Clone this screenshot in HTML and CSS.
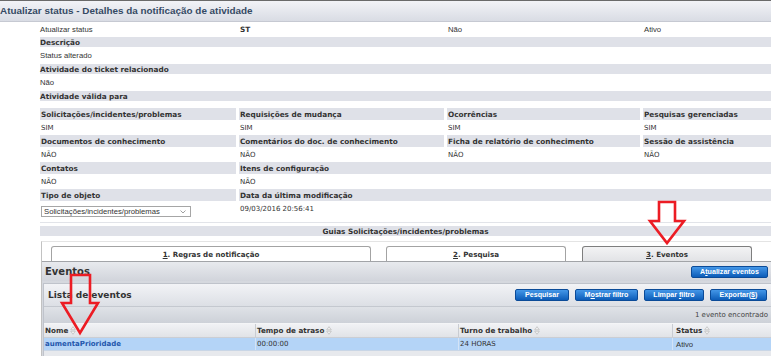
FILE: index.html
```html
<!DOCTYPE html>
<html lang="pt">
<head>
<meta charset="utf-8">
<title>Atualizar status</title>
<link rel="stylesheet" href="styles.css">
</head>
<body>
<div class="title">Atualizar status - Detalhes da notificação de atividade</div>
<div class="details">
  <div class="row4">
    <span class="nv">Atualizar status</span><span class="bv">ST</span><span class="nv">Não</span><span class="nv">Ativo</span>
  </div>
  <div class="bar lbl">Descrição</div>
  <div class="val nv">Status alterado</div>
  <div class="bar lbl">Atividade do ticket relacionado</div>
  <div class="val nv">Não</div>
  <div class="bar lbl">Atividade válida para</div>

  <div class="grid">
    <div class="gl lbl">Solicitações/incidentes/problemas</div>
    <div class="gl lbl">Requisições de mudança</div>
    <div class="gl lbl">Ocorrências</div>
    <div class="gl lbl">Pesquisas gerenciadas</div>
    <div class="gv dv">SIM</div>
    <div class="gv dv">SIM</div>
    <div class="gv dv">SIM</div>
    <div class="gv dv">SIM</div>
    <div class="gl lbl">Documentos de conhecimento</div>
    <div class="gl lbl">Comentários do doc. de conhecimento</div>
    <div class="gl lbl">Ficha de relatório de conhecimento</div>
    <div class="gl lbl">Sessão de assistência</div>
    <div class="gv dv">NÃO</div>
    <div class="gv dv">NÃO</div>
    <div class="gv dv">NÃO</div>
    <div class="gv dv">NÃO</div>
    <div class="gl lbl">Contatos</div>
    <div class="gl lbl span3">Itens de configuração</div>
    <div class="gv dv">NÃO</div>
    <div class="gv dv span3">NÃO</div>
    <div class="gl lbl">Tipo de objeto</div>
    <div class="gl lbl span3">Data da última modificação</div>
    <div class="gs">
      <div class="select nv">
        <span>Solicitações/incidentes/problemas</span>
        <svg class="chev" width="6" height="4" viewBox="0 0 6 4"><polyline points="0.5,0.5 3,3 5.5,0.5" fill="none" stroke="#888" stroke-width="0.8"/></svg>
      </div>
    </div>
    <div class="gs span3 dv date">09/03/2016 20:56:41</div>
  </div>

  <div class="sep"></div>
  <div class="guias lbl">Guias Solicitações/incidentes/problemas</div>

  <div class="panel">
    <div class="tabs">
      <div class="tab t1 lbl"><span><u>1</u>. Regras de notificação</span></div>
      <div class="tab t2 lbl"><span><u>2</u>. Pesquisa</span></div>
      <div class="tab t3 active lbl"><span><u>3</u>. Eventos</span></div>
    </div>
    <div class="evbar">
      <span class="evtitle">Eventos</span>
      <span class="btn w77"><span>A<u>t</u>ualizar eventos</span></span>
    </div>
    <div class="evbody">
      <div class="list">
        <div class="listhead">
          <span class="listtitle">Lista de eventos</span>
          <div class="btns">
            <span class="btn w54"><span>Pesquisar</span></span>
            <span class="btn w63"><span>M<u>o</u>strar filtro</span></span>
            <span class="btn w60"><span>Limpar <u>f</u>iltro</span></span>
            <span class="btn w57"><span>Exportar(<u>$</u>)</span></span>
          </div>
        </div>
        <div class="toolbar dv">1 evento encontrado</div>
        <div class="thead">
          <div class="th lbl"><span>Nome</span> <svg class="sort" width="6" height="9" viewBox="0 0 6 9"><path d="M0.7 3.8 L3 0.7 L5.3 3.8 Z M0.7 5.2 L3 8.3 L5.3 5.2 Z" fill="#f4f4f4" stroke="#b9b9b9" stroke-width="0.7"/></svg></div>
          <div class="th lbl"><span>Tempo de atraso</span> <svg class="sort" width="6" height="9" viewBox="0 0 6 9"><path d="M0.7 3.8 L3 0.7 L5.3 3.8 Z M0.7 5.2 L3 8.3 L5.3 5.2 Z" fill="#f4f4f4" stroke="#b9b9b9" stroke-width="0.7"/></svg></div>
          <div class="th lbl"><span>Turno de trabalho</span> <svg class="sort" width="6" height="9" viewBox="0 0 6 9"><path d="M0.7 3.8 L3 0.7 L5.3 3.8 Z M0.7 5.2 L3 8.3 L5.3 5.2 Z" fill="#f4f4f4" stroke="#b9b9b9" stroke-width="0.7"/></svg></div>
          <div class="th lbl"><span>Status</span> <svg class="sort" width="6" height="9" viewBox="0 0 6 9"><path d="M0.7 3.8 L3 0.7 L5.3 3.8 Z M0.7 5.2 L3 8.3 L5.3 5.2 Z" fill="#f4f4f4" stroke="#b9b9b9" stroke-width="0.7"/></svg></div>
        </div>
        <div class="trow">
          <div class="td link">aumentaPrioridade</div>
          <div class="td dv">00:00:00</div>
          <div class="td dv">24 HORAS</div>
          <div class="td nv">Ativo</div>
        </div>
      </div>
    </div>
  </div>
</div>

<svg class="arrows" width="771" height="356" viewBox="0 0 771 356">
  <polygon points="659,202 675,202 675,221 684,221 667,243 650,221 659,221" fill="none" stroke="#ec1c24" stroke-width="2.6" stroke-linejoin="miter"/>
  <polygon points="71,275 90,275 90,303 98,303 80,333 62,303 71,303" fill="none" stroke="#ec1c24" stroke-width="2.6" stroke-linejoin="miter"/>
</svg>
</body>
</html>
```

FILE: styles.css
```css
* { box-sizing: border-box; margin: 0; padding: 0; }
html, body { width: 771px; height: 356px; overflow: hidden; background: #fff; }
body { font-family: "DejaVu Sans", sans-serif; color: #333; position: relative; }

.title {
  height: 22px;
  border-top: 1px solid #6a6a6a;
  border-bottom: 1px solid #c6c9d2;
  background: linear-gradient(#f2f3f7, #d9dce4);
  font: bold 9.9px "Liberation Sans", sans-serif;
  color: #354a64;
  line-height: 20px;
  white-space: nowrap;
}

.details { padding-left: 40px; }

.lbl { font: bold 7.3px "DejaVu Sans", sans-serif; color: #333; white-space: nowrap; }
.nv { font: 7.7px "Liberation Sans", sans-serif; color: #333; white-space: nowrap; }
.dv { font: 7px "DejaVu Sans", sans-serif; color: #333; white-space: nowrap; }
.bv { font: bold 7.3px "DejaVu Sans", sans-serif; color: #333; }

.row4 {
  display: grid;
  grid-template-columns: 200px 208px 196px 1fr;
  height: 15px;
  align-items: center;
}

.bar { height: 10px; background: #dfe1e8; display: flex; align-items: center; }
.val { height: 17px; display: flex; align-items: center; }

.grid {
  margin-top: 7px;
  display: grid;
  grid-template-columns: 196px 205px 193px 1fr;
  column-gap: 3px;
}
.gl { height: 12px; background: #dfe1e8; display: flex; align-items: center; padding-left: 1px; }
.gv { height: 15px; display: flex; align-items: center; padding-left: 1px; }
.gs { height: 21px; display: flex; align-items: flex-start; padding-top: 5px; padding-left: 1px; }
.gs.date { padding-top: 4px; }
.span3 { grid-column: span 3; }

.select {
  width: 150px;
  height: 11px;
  border: 1px solid #a6a6a6;
  background: #fff;
  display: flex;
  align-items: center;
  justify-content: space-between;
  padding: 0 4px 0 2px;
}
.chev { display: block; }

.sep { height: 1px; background: #e2e4e9; }
.guias {
  margin-top: 3px;
  height: 10px;
  background: #dfe1e8;
  display: flex;
  align-items: center;
  justify-content: center;
}

.panel {
  margin-top: 5px;
  margin-left: 1px;
  border-left: 1px solid #c2c2c2;
  border-top: 1px solid #e4e4e4;
}
.tabs {
  height: 19px;
  display: flex;
  align-items: flex-end;
  padding-left: 9px;
}
.tab {
  height: 15px;
  border: 1px solid #a3a3a3;
  border-bottom: none;
  border-radius: 3px 3px 0 0;
  background: #fff;
  display: flex;
  align-items: center;
  justify-content: center;
  font-size: 7.1px;
}
.t1 { width: 320px; }
.t2 { width: 180px; margin-left: 15px; }
.t3 { width: 170px; margin-left: 16px; }
.tab.active { background: linear-gradient(#f3f3f4, #e2e3e6); border-color: #7e7e7e; }

.evbar {
  height: 20px;
  border-top: 1px solid #a2a4a8;
  background: linear-gradient(#e8eaee, #d1d4db);
  display: flex;
  align-items: center;
  justify-content: space-between;
  padding: 0 3px 0 3px;
}
.evtitle { font: bold 10px "DejaVu Sans", sans-serif; color: #333; }

.btn {
  display: inline-flex;
  align-items: center;
  justify-content: center;
  height: 12px;
  border: 1px solid #0b4b98;
  border-radius: 2px;
  background: linear-gradient(#4497e8, #0c5cb8);
  color: #fff;
  font: bold 7.1px "Liberation Sans", sans-serif;
  white-space: nowrap;
}
.btn u { text-decoration: underline; }
.w77 { width: 77px; }
.w54 { width: 54px; }
.w63 { width: 63px; }
.w60 { width: 60px; }
.w57 { width: 57px; }

.evbody { background: #d5d8de; padding-top: 2px; height: 80px; }
.list {
  margin-left: 1px;
  border: 1px solid #bfc3cb;
  border-right: none;
  background: #e7e9ed;
  height: 80px;
}
.listhead {
  height: 23px;
  background: linear-gradient(#f2f3f6, #dcdfe5);
  border-bottom: 1px solid #c4c8cf;
  display: flex;
  align-items: center;
  justify-content: space-between;
  padding: 0 4px 0 4px;
}
.listtitle { font: bold 9px "DejaVu Sans", sans-serif; color: #333; }
.btns { display: flex; gap: 6px; }

.toolbar {
  height: 17px;
  background: linear-gradient(#dfe2e7, #cdd1d8);
  border-bottom: 1px solid #f4f5f7;
  display: flex;
  align-items: center;
  justify-content: flex-end;
  padding-right: 3px;
  color: #444;
}

.thead, .trow {
  display: grid;
  grid-template-columns: 212px 203px 214px 1fr;
}
.thead {
  height: 14px;
  background: linear-gradient(#f1f2f5, #e1e3e7);
  border-bottom: 1px solid #cbced4;
}
.th {
  display: flex;
  align-items: center;
  gap: 2px;
  padding-left: 1px;
  border-right: 1px solid #c9ccd2;
  font-size: 7.2px;
}
.th:last-child { border-right: none; padding-left: 3px; }
.sort { display: block; }

.trow { height: 13px; background: #b4d4f7; border-bottom: 1px solid #c9d6e6; }
.td {
  display: flex;
  align-items: center;
  padding-left: 1px;
  border-right: 1px solid #d3e3f7;
}
.td:last-child { border-right: none; padding-left: 3px; }
.link { font: bold 7px "DejaVu Sans", sans-serif; color: #2457ad; }

.arrows { position: absolute; left: 0; top: 0; pointer-events: none; }
```
